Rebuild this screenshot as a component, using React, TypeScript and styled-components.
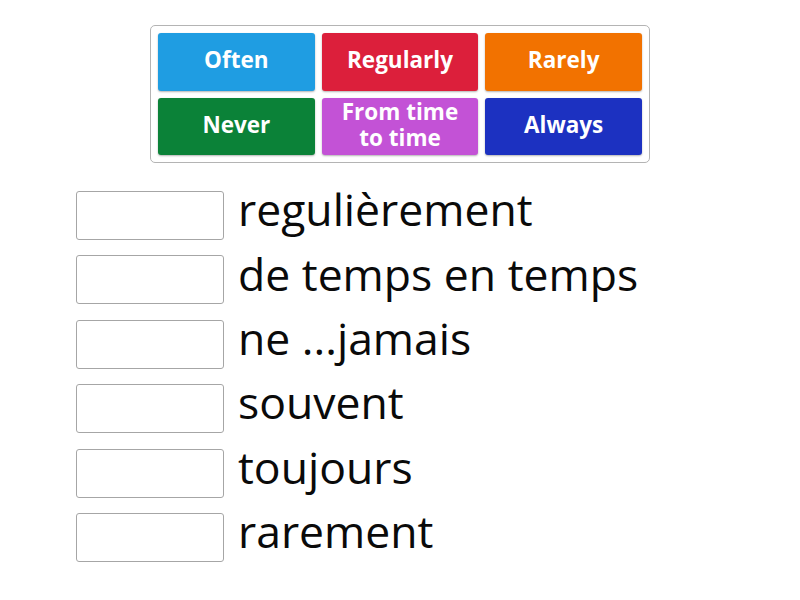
import React from 'react'
import styled, { createGlobalStyle } from 'styled-components'

const GlobalStyle = createGlobalStyle`
  html, body {
    margin: 0;
    padding: 0;
    background: #fff;
  }
  body {
    font-family: "Open Sans", "Noto Sans", Arial, sans-serif;
  }
`

const Page = styled.div`
  width: 800px;
  height: 600px;
  display: flex;
  flex-direction: column;
  align-items: center;
  padding-top: 25px;
  box-sizing: border-box;
`

const Bank = styled.div`
  width: 500px;
  box-sizing: border-box;
  padding: 7px;
  border: 1px solid #b4b4b4;
  border-radius: 5px;
  display: grid;
  grid-template-columns: repeat(3, 1fr);
  grid-auto-rows: 57.5px;
  gap: 7px;
`

const Tile = styled.div<{ $bg: string }>`
  background: ${({ $bg }) => $bg};
  border-radius: 3px;
  box-shadow: 0 1px 2px rgba(0, 0, 0, 0.3);
  color: #fff;
  font-weight: 700;
  font-size: 22.5px;
  line-height: 26px;
  text-align: center;
  display: flex;
  align-items: center;
  justify-content: center;
  padding: 0 10px 3px;
`

const List = styled.div`
  align-self: stretch;
  margin-top: 28px;
  padding-left: 76px;
  display: flex;
  flex-direction: column;
  gap: 15.4px;
`

const Row = styled.div`
  display: flex;
  align-items: center;
  height: 49px;
`

const Slot = styled.div`
  width: 148px;
  height: 49px;
  box-sizing: border-box;
  border: 1px solid #a6a6a6;
  border-radius: 3px;
  background: #fff;
  flex-shrink: 0;
`

const Term = styled.div`
  margin-left: 14px;
  font-size: 44.5px;
  color: #0a0a0a;
  white-space: nowrap;
  line-height: 1;
  padding-bottom: 12px;
`

const tiles = [
  { label: 'Often', bg: '#1f9de2' },
  { label: 'Regularly', bg: '#dc1f3b' },
  { label: 'Rarely', bg: '#f27200' },
  { label: 'Never', bg: '#0b8238' },
  { label: 'From time to time', bg: '#c352d6' },
  { label: 'Always', bg: '#1c31c1' },
]

const terms = [
  'regulièrement',
  'de temps en temps',
  'ne ...jamais',
  'souvent',
  'toujours',
  'rarement',
]

const App = () => (
  <>
    <GlobalStyle />
    <Page>
      <Bank>
        {tiles.map(t => (
          <Tile key={t.label} $bg={t.bg}>{t.label}</Tile>
        ))}
      </Bank>
      <List>
        {terms.map(t => (
          <Row key={t}>
            <Slot />
            <Term>{t}</Term>
          </Row>
        ))}
      </List>
    </Page>
  </>
)

export default App
